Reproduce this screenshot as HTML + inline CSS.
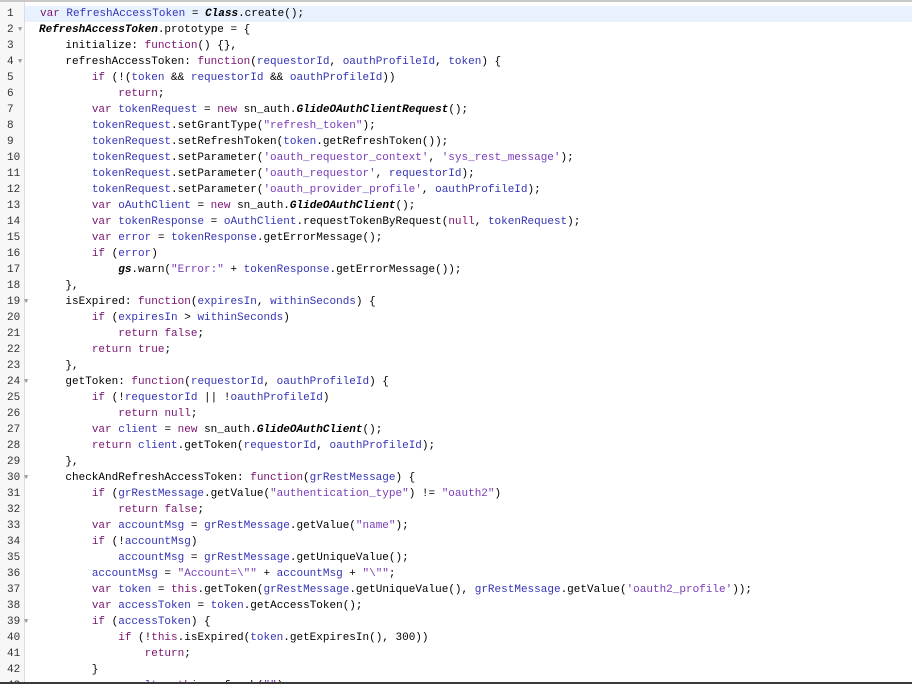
<!DOCTYPE html>
<html><head><meta charset="utf-8"><style>
html,body{margin:0;padding:0;background:#fff;width:912px;height:684px;overflow:hidden;position:relative}
.top{position:absolute;left:0;top:0;width:912px;height:2px;background:#c8c8c8}
.bot{position:absolute;left:0;top:682px;width:912px;height:2px;background:#3a3a3a}
.gut{position:absolute;left:0;top:2px;width:24px;height:680px;background:#f7f7f7;border-right:1px solid #ddd}
.hl{position:absolute;left:25px;top:6px;width:887px;height:16px;background:#e8f2ff}
.code{position:absolute;left:0;top:6px;font-family:"Liberation Mono",monospace;font-size:11px;line-height:16px;color:#000;white-space:normal;width:912px}
.l{height:16px;position:relative}
.n{position:absolute;left:7px;width:14px;color:#333}
.f{position:absolute;left:18px;top:0;color:#999;font-size:7px}
.f2{left:24px}
.t{position:absolute;left:39px;white-space:pre}
.k{color:#7a1470}.v{color:#3535b5}.s{color:#7a3cb8}.i{font-style:italic;font-weight:bold}
</style></head><body>
<div class="top"></div><div class="gut"></div><div class="hl"></div>
<div class="code">
<div class="l"><span class="n">1</span><span class="t" style="left:40px"><span class="k">var</span> <span class="v">RefreshAccessToken</span> = <span class="i">Class</span>.create();</span></div>
<div class="l"><span class="n">2</span><span class="f">▼</span><span class="t"><span class="i">RefreshAccessToken</span>.prototype = {</span></div>
<div class="l"><span class="n">3</span><span class="t">    initialize: <span class="k">function</span>() {},</span></div>
<div class="l"><span class="n">4</span><span class="f">▼</span><span class="t">    refreshAccessToken: <span class="k">function</span>(<span class="v">requestorId</span>, <span class="v">oauthProfileId</span>, <span class="v">token</span>) {</span></div>
<div class="l"><span class="n">5</span><span class="t">        <span class="k">if</span> (!(<span class="v">token</span> &amp;&amp; <span class="v">requestorId</span> &amp;&amp; <span class="v">oauthProfileId</span>))</span></div>
<div class="l"><span class="n">6</span><span class="t">            <span class="k">return</span>;</span></div>
<div class="l"><span class="n">7</span><span class="t">        <span class="k">var</span> <span class="v">tokenRequest</span> = <span class="k">new</span> sn_auth.<span class="i">GlideOAuthClientRequest</span>();</span></div>
<div class="l"><span class="n">8</span><span class="t">        <span class="v">tokenRequest</span>.setGrantType(<span class="s">"refresh_token"</span>);</span></div>
<div class="l"><span class="n">9</span><span class="t">        <span class="v">tokenRequest</span>.setRefreshToken(<span class="v">token</span>.getRefreshToken());</span></div>
<div class="l"><span class="n">10</span><span class="t">        <span class="v">tokenRequest</span>.setParameter(<span class="s">'oauth_requestor_context'</span>, <span class="s">'sys_rest_message'</span>);</span></div>
<div class="l"><span class="n">11</span><span class="t">        <span class="v">tokenRequest</span>.setParameter(<span class="s">'oauth_requestor'</span>, <span class="v">requestorId</span>);</span></div>
<div class="l"><span class="n">12</span><span class="t">        <span class="v">tokenRequest</span>.setParameter(<span class="s">'oauth_provider_profile'</span>, <span class="v">oauthProfileId</span>);</span></div>
<div class="l"><span class="n">13</span><span class="t">        <span class="k">var</span> <span class="v">oAuthClient</span> = <span class="k">new</span> sn_auth.<span class="i">GlideOAuthClient</span>();</span></div>
<div class="l"><span class="n">14</span><span class="t">        <span class="k">var</span> <span class="v">tokenResponse</span> = <span class="v">oAuthClient</span>.requestTokenByRequest(<span class="k">null</span>, <span class="v">tokenRequest</span>);</span></div>
<div class="l"><span class="n">15</span><span class="t">        <span class="k">var</span> <span class="v">error</span> = <span class="v">tokenResponse</span>.getErrorMessage();</span></div>
<div class="l"><span class="n">16</span><span class="t">        <span class="k">if</span> (<span class="v">error</span>)</span></div>
<div class="l"><span class="n">17</span><span class="t">            <span class="i">gs</span>.warn(<span class="s">"Error:"</span> + <span class="v">tokenResponse</span>.getErrorMessage());</span></div>
<div class="l"><span class="n">18</span><span class="t">    },</span></div>
<div class="l"><span class="n">19</span><span class="f f2">▼</span><span class="t">    isExpired: <span class="k">function</span>(<span class="v">expiresIn</span>, <span class="v">withinSeconds</span>) {</span></div>
<div class="l"><span class="n">20</span><span class="t">        <span class="k">if</span> (<span class="v">expiresIn</span> &gt; <span class="v">withinSeconds</span>)</span></div>
<div class="l"><span class="n">21</span><span class="t">            <span class="k">return</span> <span class="k">false</span>;</span></div>
<div class="l"><span class="n">22</span><span class="t">        <span class="k">return</span> <span class="k">true</span>;</span></div>
<div class="l"><span class="n">23</span><span class="t">    },</span></div>
<div class="l"><span class="n">24</span><span class="f f2">▼</span><span class="t">    getToken: <span class="k">function</span>(<span class="v">requestorId</span>, <span class="v">oauthProfileId</span>) {</span></div>
<div class="l"><span class="n">25</span><span class="t">        <span class="k">if</span> (!<span class="v">requestorId</span> || !<span class="v">oauthProfileId</span>)</span></div>
<div class="l"><span class="n">26</span><span class="t">            <span class="k">return</span> <span class="k">null</span>;</span></div>
<div class="l"><span class="n">27</span><span class="t">        <span class="k">var</span> <span class="v">client</span> = <span class="k">new</span> sn_auth.<span class="i">GlideOAuthClient</span>();</span></div>
<div class="l"><span class="n">28</span><span class="t">        <span class="k">return</span> <span class="v">client</span>.getToken(<span class="v">requestorId</span>, <span class="v">oauthProfileId</span>);</span></div>
<div class="l"><span class="n">29</span><span class="t">    },</span></div>
<div class="l"><span class="n">30</span><span class="f f2">▼</span><span class="t">    checkAndRefreshAccessToken: <span class="k">function</span>(<span class="v">grRestMessage</span>) {</span></div>
<div class="l"><span class="n">31</span><span class="t">        <span class="k">if</span> (<span class="v">grRestMessage</span>.getValue(<span class="s">"authentication_type"</span>) != <span class="s">"oauth2"</span>)</span></div>
<div class="l"><span class="n">32</span><span class="t">            <span class="k">return</span> <span class="k">false</span>;</span></div>
<div class="l"><span class="n">33</span><span class="t">        <span class="k">var</span> <span class="v">accountMsg</span> = <span class="v">grRestMessage</span>.getValue(<span class="s">"name"</span>);</span></div>
<div class="l"><span class="n">34</span><span class="t">        <span class="k">if</span> (!<span class="v">accountMsg</span>)</span></div>
<div class="l"><span class="n">35</span><span class="t">            <span class="v">accountMsg</span> = <span class="v">grRestMessage</span>.getUniqueValue();</span></div>
<div class="l"><span class="n">36</span><span class="t">        <span class="v">accountMsg</span> = <span class="s">"Account=\""</span> + <span class="v">accountMsg</span> + <span class="s">"\""</span>;</span></div>
<div class="l"><span class="n">37</span><span class="t">        <span class="k">var</span> <span class="v">token</span> = <span class="k">this</span>.getToken(<span class="v">grRestMessage</span>.getUniqueValue(), <span class="v">grRestMessage</span>.getValue(<span class="s">'oauth2_profile'</span>));</span></div>
<div class="l"><span class="n">38</span><span class="t">        <span class="k">var</span> <span class="v">accessToken</span> = <span class="v">token</span>.getAccessToken();</span></div>
<div class="l"><span class="n">39</span><span class="f f2">▼</span><span class="t">        <span class="k">if</span> (<span class="v">accessToken</span>) {</span></div>
<div class="l"><span class="n">40</span><span class="t">            <span class="k">if</span> (!<span class="k">this</span>.isExpired(<span class="v">token</span>.getExpiresIn(), 300))</span></div>
<div class="l"><span class="n">41</span><span class="t">                <span class="k">return</span>;</span></div>
<div class="l"><span class="n">42</span><span class="t">        }</span></div>
<div class="l"><span class="n">43</span><span class="t">        <span class="k">var</span> <span class="v">result</span> = <span class="k">this</span>.refresh(<span class="s">""</span>);</span></div>
</div>
<div class="bot"></div>
</body></html>
